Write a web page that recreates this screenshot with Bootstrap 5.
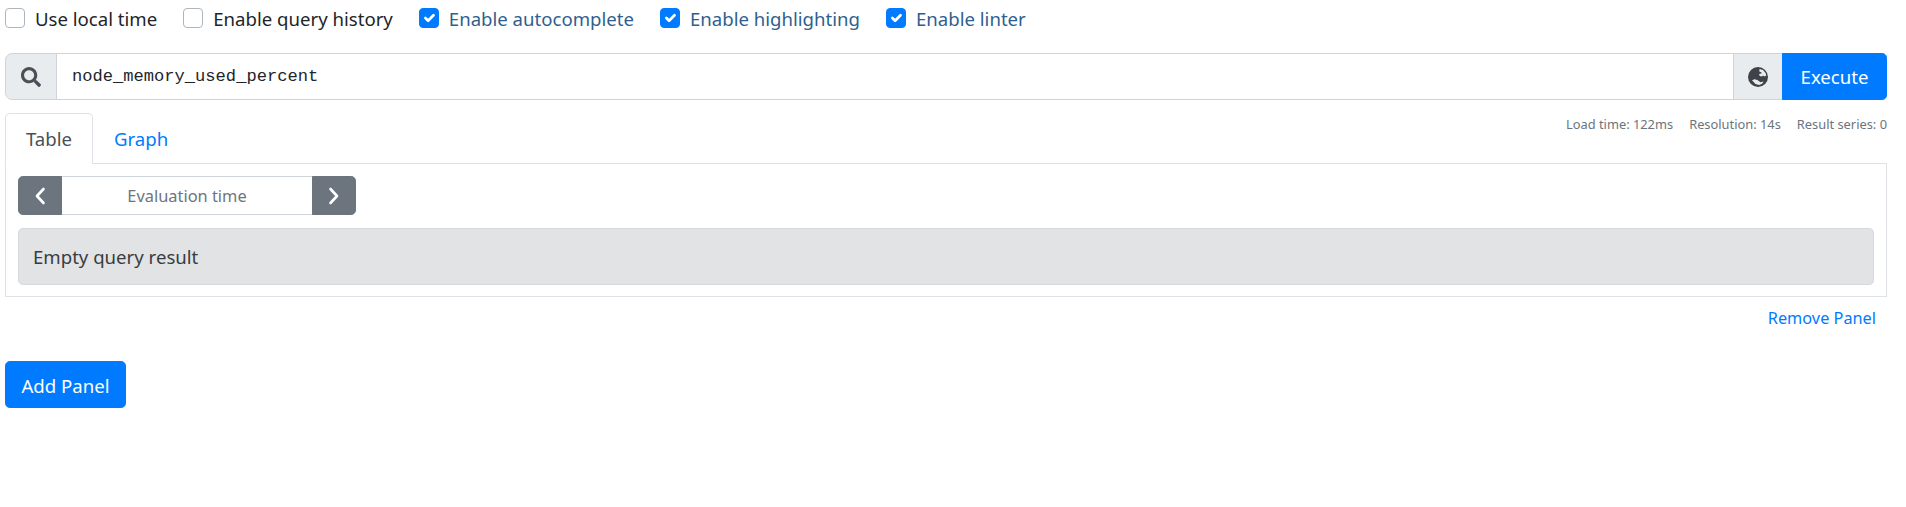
<!DOCTYPE html>
<html lang="en">
<head>
<meta charset="UTF-8">
<title>Prometheus Time Series Collection and Processing Server</title>
<link href="https://cdn.jsdelivr.net/npm/bootstrap@5.3.0/dist/css/bootstrap.min.css" rel="stylesheet">
<style>
:root { --bs-border-radius: 4.8px; }
html { font-size: 19.2px; }
body { font-family: "Noto Sans", "Liberation Sans", sans-serif; color: #212529; background: #fff; font-size: 18.6px; line-height: 1.5; }
.btn { --bs-btn-border-radius: 4.8px; }
.alert { --bs-alert-border-radius: 4.8px; }
.nav-tabs { --bs-nav-tabs-border-radius: 4.8px; }
.page-wrap { padding: 0 19px 0 5px; }

.opts-row { height: 53px; padding-top: 8px; gap: 26px; }
.opt-item { display: flex; align-items: flex-start; gap: 10px; height: 20px; line-height: 21px; }
.opt-item .form-check-input { width: 20px; height: 20px; margin: 0; border-color: #adb5bd; border-radius: 4px; flex: none; }
.opt-item .form-check-input:checked { background-color: #007bff; border-color: #007bff; }
.opt-on { color: #2f5f8f; }

.query-bar { height: 47px; }
.query-bar .input-group-text { background: #e9ecef; border-color: #ced4da; justify-content: center; padding: 0; }
.addon-search { width: 52px; }
.addon-globe { width: 50px; }
.query-input { font-family: "Liberation Mono", monospace; font-size: 17.1px; border-color: #ced4da; padding-left: 15px; color: #212529; }
.exec-btn { width: 105px; background: #007bff; border-color: #007bff; font-size: 18.6px; padding: 0; }

.tabs-row { margin-top: 13px; border-bottom: 1px solid #dee2e6; height: 51px; }
.tabs-row .nav-link { color: #007bff; height: 51px; padding: 0 20px; line-height: 49px; font-size: 18.6px; }
.tabs-row .nav-link.active { color: #495057; border-color: #dee2e6 #dee2e6 #fff; }
.run-stats { font-size: 12.85px; color: #6c757d; gap: 16px; line-height: 1; padding-top: 5px; }

.tab-body { border: 1px solid #dee2e6; border-top: 0; padding: 12px 12px 11px; }
.time-group { width: 338px; height: 39px; }
.time-btn { width: 44px; background: #6c757d; border-color: #6c757d; padding: 0; display: flex; align-items: center; justify-content: center; }
.time-input { font-size: 16.4px; text-align: center; border-color: #ced4da; color: #6c757d; padding: 2px 0 0; }
.time-input::placeholder { color: #6c757d; }
.empty-alert { margin: 13px 0 0; height: 57px; padding: 0 14px; display: flex; align-items: center; background: #e2e3e5; border-color: #d6d8db; color: #383d41; }

.remove-row { height: 45px; padding: 8px 11px 0 0; text-align: right; font-size: 16.3px; line-height: 26px; }
.remove-row a { color: #007bff; text-decoration: none; }
.add-btn { margin-top: 19px; width: 121px; height: 47px; background: #007bff; border-color: #007bff; font-size: 18.6px; padding: 2px 0 0; }
</style>
</head>
<body>
<div class="page-wrap">

  <div class="d-flex opts-row">
    <label class="opt-item"><input class="form-check-input" type="checkbox">Use local time</label>
    <label class="opt-item"><input class="form-check-input" type="checkbox">Enable query history</label>
    <label class="opt-item opt-on"><input class="form-check-input" type="checkbox" checked>Enable autocomplete</label>
    <label class="opt-item opt-on"><input class="form-check-input" type="checkbox" checked>Enable highlighting</label>
    <label class="opt-item opt-on"><input class="form-check-input" type="checkbox" checked>Enable linter</label>
  </div>

  <div class="input-group query-bar">
    <span class="input-group-text addon-search">
      <svg width="20" height="20" viewBox="0 0 512 512" fill="#495057"><path d="M505 442.7L405.3 343c-4.5-4.5-10.6-7-17-7H372c27.6-35.3 44-79.7 44-128C416 93.1 322.9 0 208 0S0 93.1 0 208s93.1 208 208 208c48.3 0 92.7-16.4 128-44v16.3c0 6.4 2.5 12.5 7 17l99.7 99.7c9.4 9.4 24.6 9.4 33.9 0l28.3-28.3c9.4-9.4 9.4-24.6.1-34zM208 336c-70.7 0-128-57.2-128-128 0-70.7 57.2-128 128-128 70.7 0 128 57.2 128 128 0 70.7-57.2 128-128 128z"/></svg>
    </span>
    <input type="text" class="form-control query-input" value="node_memory_used_percent">
    <span class="input-group-text addon-globe">
      <svg width="20" height="20" viewBox="0 0 20 20"><circle cx="10" cy="10" r="10" fill="#3d4349"/><path d="M11.5 2l3.5 1 2.6 3 .6 2.6-1.4.8-1.8-1-1 1.2-2.2-.6-.8-1.4 1.2-1 .9.4.5-1.4-2.3-1.2zM4 13.2l2.6-1 2.8.8 3 2.2 3.2-.7-1.5 2.2-3 1.2-3.6-.9z" fill="#e9ecef"/></svg>
    </span>
    <button class="btn btn-primary exec-btn" type="button">Execute</button>
  </div>

  <ul class="nav nav-tabs tabs-row">
    <li class="nav-item"><a class="nav-link active" href="#">Table</a></li>
    <li class="nav-item"><a class="nav-link" href="#">Graph</a></li>
    <li class="ms-auto d-flex run-stats">
      <span>Load time: 122ms</span><span>Resolution: 14s</span><span>Result series: 0</span>
    </li>
  </ul>

  <div class="tab-body">
    <div class="input-group time-group">
      <button class="btn btn-secondary time-btn" type="button">
        <svg width="12" height="20" viewBox="0 0 12 20" fill="none" stroke="#fff" stroke-width="2.6" stroke-linecap="round" stroke-linejoin="round"><path d="M9.5 3L3 10l6.5 7"/></svg>
      </button>
      <input type="text" class="form-control time-input" placeholder="Evaluation time">
      <button class="btn btn-secondary time-btn" type="button">
        <svg width="12" height="20" viewBox="0 0 12 20" fill="none" stroke="#fff" stroke-width="2.6" stroke-linecap="round" stroke-linejoin="round"><path d="M2.5 3L9 10l-6.5 7"/></svg>
      </button>
    </div>
    <div class="alert alert-secondary empty-alert" role="alert">Empty query result</div>
  </div>

  <div class="remove-row"><a href="#">Remove Panel</a></div>
  <button class="btn btn-primary add-btn" type="button">Add Panel</button>

</div>
<script src="https://cdn.jsdelivr.net/npm/bootstrap@5.3.0/dist/js/bootstrap.bundle.min.js"></script>
</body>
</html>
